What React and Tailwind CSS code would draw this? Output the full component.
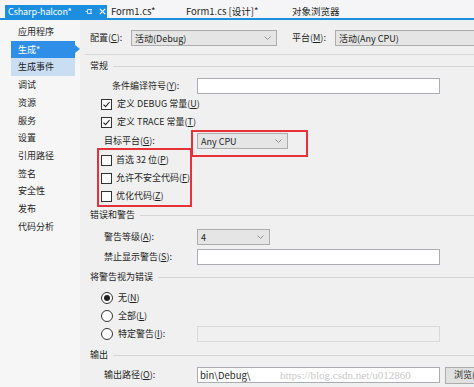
import React from "react";

const Chevron = () => (
    <svg width="7" height="4" viewBox="0 0 7 4" className="shrink-0">
        <polyline points="0.5,0.5 3.5,3.5 6.5,0.5" fill="none" stroke="#8a8a8a" strokeWidth="0.9"/>
    </svg>
);

const Combo = ({text, className}) => (
    <div className={`h-[16px] border border-[#acacac] bg-[#e5e5e5] flex items-center justify-between pl-[3px] pr-[5px] ${className}`}>
        <span className="leading-none whitespace-nowrap">{text}</span>
        <Chevron/>
    </div>
);

const TextBox = ({children, disabled}) => (
    <div className={`h-[16px] w-[243px] shrink-0 border flex items-center pl-[2px] ${disabled ? "border-[#d9d9d9] bg-[#f0f0f0]" : "border-[#abadb3] bg-white"}`}>
        {children}
    </div>
);

const Check = ({checked}) => (
    <span className="w-[11px] h-[11px] border border-[#333] bg-white flex items-center justify-center shrink-0">
        {checked && (
            <svg width="9" height="9" viewBox="0 0 9 9">
                <polyline points="1.5,4.6 3.6,6.7 7.6,2" fill="none" stroke="#222" strokeWidth="1.1"/>
            </svg>
        )}
    </span>
);

const Radio = ({checked}) => (
    <span className="w-[12px] h-[12px] rounded-full border border-[#333] bg-white flex items-center justify-center shrink-0">
        {checked && <span className="w-[6px] h-[6px] rounded-full bg-[#222]"/>}
    </span>
);

const Header = ({text, h}) => (
    <div className={`flex items-center pl-[10px] ${h}`}>
        <span>{text}</span>
        <div className="flex-1 h-px bg-[#d5d5d5] ml-[5px]"/>
    </div>
);

const Key = ({k}) => <u className="underline-offset-[1px]">{k}</u>;

const sideItems = ["应用程序", "生成*", "生成事件", "调试", "资源", "服务", "设置", "引用路径", "签名", "安全性", "发布", "代码分析"];

export default function App() {
    return (
        <div className="w-[474px] h-[387px] overflow-hidden bg-[#f0f0f0] text-[#1e1e1e] text-[9px] font-['Noto_Sans_CJK_SC','Noto_Sans',sans-serif]">
            {/* tabs */}
            <div className="h-[20px] bg-[#f5f5f7] border-b-2 border-[#1c8ee0] flex items-end pl-[5px] text-[9.5px] whitespace-nowrap">
                <div className="h-[13px] w-[102px] shrink-0 bg-[#1c8ee0] text-white flex items-center pl-[3px]">
                    <span className="w-[75px] text-[9px] tracking-[-0.1px]">Csharp-halcon*</span>
                    <svg width="8" height="7" viewBox="0 0 8 7" className="ml-[2px]">
                        <path d="M0.5 3.5H2.5M2.5 1.5V5.5M2.5 1.5H7M2.5 5.5H7M6 1.5V5.5" fill="none" stroke="#cfe6fa" strokeWidth="1"/>
                    </svg>
                    <svg width="7" height="7" viewBox="0 0 7 7" className="ml-[6px]">
                        <path d="M0.8 0.8L6.2 6.2M6.2 0.8L0.8 6.2" stroke="#fff" strokeWidth="1.1"/>
                    </svg>
                </div>
                <div className="h-[13px] flex items-center pl-[4px] w-[79px] shrink-0">Form1.cs*</div>
                <div className="h-[13px] flex items-center w-[106px] shrink-0">Form1.cs [设计]*</div>
                <div className="h-[13px] flex items-center">对象浏览器</div>
            </div>

            <div className="flex">
                {/* sidebar */}
                <div className="w-[80px] h-[367px] shrink-0 bg-[#f6f6f6] pl-[11px] pt-[3px]">
                    {sideItems.map((s, i) => (
                        <div key={s}
                             className={`relative h-[17.7px] w-[64px] flex items-center pl-[7px] ${i === 1 ? "bg-[#2f8fe8] text-white" : i === 2 ? "bg-[#c9ddf3]" : ""}`}>
                            {s}
                            {i === 1 && (
                                <span className="absolute right-[-5px] top-[4.5px] w-0 h-0 border-y-[4.5px] border-y-transparent border-l-[5px] border-l-[#2f8fe8]"/>
                            )}
                        </div>
                    ))}
                </div>

                {/* content */}
                <div className="flex-1 flex flex-col pt-[8px] whitespace-nowrap">
                    <div className="h-[20px] flex items-center pl-[10px]">
                        <span className="w-[41px]">配置(<Key k="C"/>):</span>
                        <Combo text="活动(Debug)" className="w-[146px] shrink-0"/>
                        <span className="ml-[15px] w-[43px]">平台(<Key k="M"/>):</span>
                        <Combo text="活动(Any CPU)" className="w-[160px] shrink-0"/>
                    </div>
                    <div className="h-px bg-[#d8d8d8] mt-[6px] ml-[5px]"/>
                    <Header text="常规" h="h-[16px] mt-[3px]"/>
                    <div className="h-[16px] mt-[4px] flex items-center">
                        <span className="w-[117px] pl-[32px]">条件编译符号(<Key k="Y"/>):</span>
                        <TextBox/>
                    </div>
                    <div className="h-[18px] mt-[1px] flex items-center pl-[21px] gap-[5px]">
                        <Check checked/>
                        <span>定义 DEBUG 常量(<Key k="U"/>)</span>
                    </div>
                    <div className="h-[18px] flex items-center pl-[21px] gap-[5px]">
                        <Check checked/>
                        <span>定义 TRACE 常量(<Key k="T"/>)</span>
                    </div>
                    <div className="h-[20px] flex items-center">
                        <span className="w-[117px] pl-[24px]">目标平台(<Key k="G"/>):</span>
                        <div className="relative">
                            <Combo text="Any CPU" className="w-[91px]"/>
                            <div className="absolute left-[-6px] top-[-3px] w-[117px] h-[27px] border-2 border-[#e53238]"/>
                        </div>
                    </div>
                    <div className="relative">
                        <div className="absolute left-[17px] top-[-3px] w-[95px] h-[59px] border-2 border-[#e53238]"/>
                        {[["首选 32 位", "P"], ["允许不安全代码", "F"], ["优化代码", "Z"]].map(([t, k]) => (
                            <div key={k} className="h-[18px] flex items-center pl-[21px] gap-[4px]">
                                <Check/>
                                <span>{t}(<Key k={k}/>)</span>
                            </div>
                        ))}
                    </div>
                    <Header text="错误和警告" h="h-[20px]"/>
                    <div className="h-[24px] flex items-center">
                        <span className="w-[117px] pl-[24px]">警告等级(<Key k="A"/>):</span>
                        <Combo text="4" className="w-[73px]"/>
                    </div>
                    <div className="h-[16px] flex items-center">
                        <span className="w-[117px] pl-[24px]">禁止显示警告(<Key k="S"/>):</span>
                        <TextBox/>
                    </div>
                    <Header text="将警告视为错误" h="h-[24px]"/>
                    <div className="h-[18px] flex items-center pl-[21px] gap-[5px]">
                        <Radio checked/>
                        <span>无(<Key k="N"/>)</span>
                    </div>
                    <div className="h-[18px] flex items-center pl-[21px] gap-[5px]">
                        <Radio/>
                        <span>全部(<Key k="L"/>)</span>
                    </div>
                    <div className="h-[18px] flex items-center pl-[21px]">
                        <Radio/>
                        <span className="w-[84px] pl-[5px]">特定警告(<Key k="I"/>):</span>
                        <TextBox disabled/>
                    </div>
                    <Header text="输出" h="h-[24px]"/>
                    <div className="relative h-[16px] flex items-center">
                        <span className="w-[117px] pl-[24px]">输出路径(<Key k="O"/>):</span>
                        <TextBox>
                            <span className="text-[9.5px]">bin\Debug\</span>
                        </TextBox>
                        <div className="ml-[5px] h-[17px] w-[60px] shrink-0 border border-[#adadad] bg-[#e1e1e1] flex items-center pl-[8px]">浏览(R)...</div>
                        <div className="absolute left-[200px] top-[0px] w-[160px] overflow-hidden text-[11px] leading-[16px] text-[#c9c9c9] font-['Liberation_Serif',serif]">
                            https://blog.csdn.net/u012860
                        </div>
                    </div>
                </div>
            </div>
        </div>
    );
}
